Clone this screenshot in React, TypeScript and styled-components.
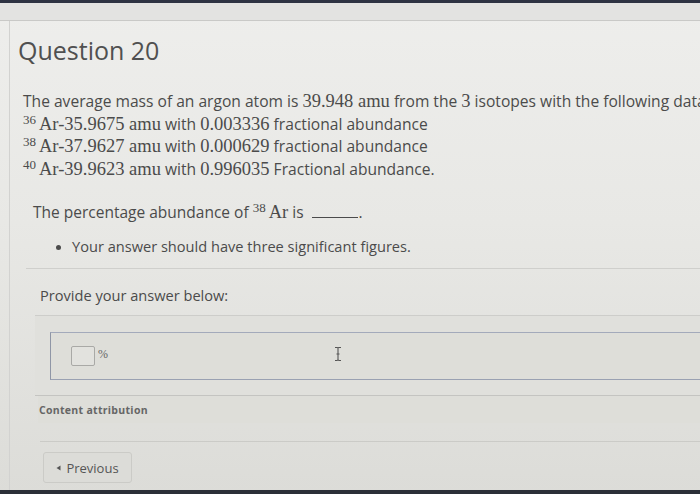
import styled, { createGlobalStyle } from "styled-components";

const GlobalStyle = createGlobalStyle`
  html, body {
    margin: 0;
    padding: 0;
  }
  body {
    font-family: "Open Sans", "Liberation Sans", sans-serif;
    color: #4b4b4b;
  }
`;

const Page = styled.div`
  width: 700px;
  height: 494px;
  overflow: hidden;
  display: flex;
  flex-direction: column;
  background: linear-gradient(180deg, #eeeeec 0%, #e8e8e5 45%, #dcdcd8 100%);
`;

const TopBar = styled.div`
  height: 3px;
  background: #2e3342;
`;

const TopStrip = styled.div`
  height: 17px;
  background: #e3e3e1;
  border-bottom: 1px solid #c9c9c7;
`;

const Card = styled.div`
  flex: 1;
  margin-left: 9px;
  border-left: 1px solid #d2d2d0;
  padding-left: 8px;
  display: flex;
  flex-direction: column;
  white-space: nowrap;
`;

const Title = styled.h2`
  margin: 15px 0 0;
  font-size: 25px;
  line-height: 28px;
  font-weight: 400;
  color: #505050;
`;

const Prompt = styled.div`
  margin-top: 26px;
  padding-left: 5px;
  font-size: 15.6px;
  line-height: 22.5px;
`;

const Sci = styled.span`
  font-family: "Liberation Serif", "Times New Roman", serif;
  font-size: 18.5px;
`;

const Iso = styled.sup`
  font-family: "Liberation Serif", "Times New Roman", serif;
  font-size: 13px;
  vertical-align: 6px;
  line-height: 0;
  margin-right: 3px;
`;

const Ask = styled.div`
  margin-top: 21px;
  padding-left: 15px;
  font-size: 15.5px;
  line-height: 22px;
`;

const Blank = styled.span`
  display: inline-block;
  width: 46px;
  border-bottom: 1px solid #4b4b4b;
  margin: 0 1px 0 4px;
`;

const Bullets = styled.ul`
  margin: 12px 0 0;
  padding-left: 54px;
  font-size: 14.6px;
  line-height: 22px;
  li::marker {
    font-size: 13px;
  }
`;

const Divider = styled.hr<{ $inset: number }>`
  margin: 0 0 0 ${({ $inset }) => $inset}px;
  border: none;
  border-top: 1px solid #cfcfcc;
`;

const Label = styled.div`
  margin-top: 16px;
  padding-left: 22px;
  font-size: 14.6px;
  line-height: 20px;
`;

const AnswerPanel = styled.div`
  margin: 10px 0 0 17px;
  padding: 16px 0 15px 15px;
  background: #e0e0dc;
  border-top: 1px solid #cdcdca;
  border-bottom: 1px solid #c4c4c1;
`;

const InputBox = styled.div`
  height: 46px;
  display: flex;
  align-items: center;
  padding-left: 20px;
  border: 1px solid #8f96a6;
  border-right: none;
  border-top-color: #a3aabb;
  border-bottom-color: #9aa1b2;
  background: #deded9;
  position: relative;
`;

const Cell = styled.div`
  width: 22px;
  height: 18px;
  border: 1px solid #a9a9a6;
  border-radius: 2px;
  background: #e2e2de;
`;

const Unit = styled.span`
  margin-left: 3px;
  margin-top: -3px;
  font-size: 12px;
  color: #666;
  font-family: "Liberation Serif", serif;
`;

const Caret = styled.svg`
  position: absolute;
  left: 282px;
  top: 13px;
`;

const Attribution = styled.div`
  margin-left: 20px;
  height: 27px;
  display: flex;
  align-items: center;
  padding-left: 1px;
  background: #deded9;
  font-size: 10.5px;
  font-weight: 700;
  letter-spacing: 0.3px;
  color: #666;
`;

const Footer = styled.div`
  margin: 18px 0 0 22px;
  border-top: 1px solid #cbcbc7;
  padding: 10px 0 0 3px;
`;

const PrevButton = styled.button`
  height: 31px;
  width: 89px;
  border: 1px solid #cbcbc7;
  border-radius: 3px;
  background: #dcdcd8;
  font-family: "Open Sans", "Liberation Sans", sans-serif;
  font-size: 13px;
  color: #555;
  display: flex;
  align-items: center;
  justify-content: center;
  gap: 5px;
  padding: 0;
`;

const BottomBar = styled.div`
  height: 4px;
  background: #2b2f38;
`;

const App = () => {
  return (
    <>
      <GlobalStyle />
      <Page>
        <TopBar />
        <TopStrip />
        <Card>
          <Title>Question 20</Title>
          <Prompt>
            <div>
              The average mass of an argon atom is <Sci>39.948 amu</Sci> from the <Sci>3</Sci>{" "}
              isotopes with the following data
            </div>
            <div>
              <Iso>36</Iso>
              <Sci>Ar-35.9675 amu</Sci> with <Sci>0.003336</Sci> fractional abundance
            </div>
            <div>
              <Iso>38</Iso>
              <Sci>Ar-37.9627 amu</Sci> with <Sci>0.000629</Sci> fractional abundance
            </div>
            <div>
              <Iso>40</Iso>
              <Sci>Ar-39.9623 amu</Sci> with <Sci>0.996035</Sci> Fractional abundance.
            </div>
          </Prompt>
          <Ask>
            The percentage abundance of <Iso>38</Iso>
            <Sci>Ar</Sci> is <Blank />.
          </Ask>
          <Bullets>
            <li>Your answer should have three significant figures.</li>
          </Bullets>
          <Divider $inset={8} style={{ marginTop: 11 }} />
          <Label>Provide your answer below:</Label>
          <AnswerPanel>
            <InputBox>
              <Cell />
              <Unit>%</Unit>
              <Caret width="10" height="16" viewBox="0 0 10 16">
                <path
                  d="M2 1.5h2.2L5 2.3l.8-.8H8M5 2.3v11.4M2 14.5h2.2l.8-.8.8.8H8M3.5 8h3"
                  fill="none"
                  stroke="#555"
                  strokeWidth="1.1"
                />
              </Caret>
            </InputBox>
          </AnswerPanel>
          <Attribution>Content attribution</Attribution>
          <Footer>
            <PrevButton>
              <svg width="5" height="6" viewBox="0 0 5 6">
                <path d="M4.5 0.5v5L0.5 3z" fill="#555" />
              </svg>
              Previous
            </PrevButton>
          </Footer>
        </Card>
        <BottomBar />
      </Page>
    </>
  );
};

export default App;
